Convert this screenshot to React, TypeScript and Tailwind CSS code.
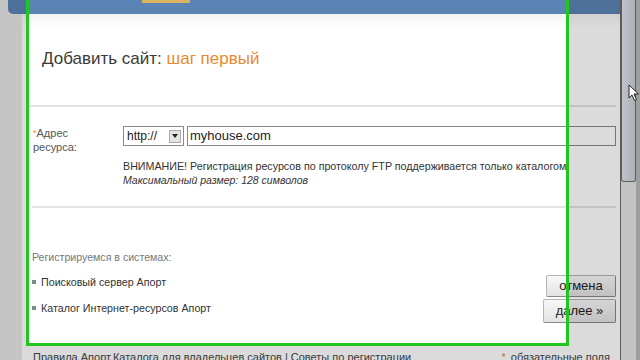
import React from "react";

const F = { fontFamily: '"Liberation Sans", Arial, sans-serif' };

export default function App() {
  return (
    <div className="relative flex w-[640px] h-[360px] overflow-hidden bg-white" style={F}>
      {/* page */}
      <div className="flex w-[620px] flex-col bg-white">
        {/* header */}
        <div className="flex h-[14px] shrink-0 bg-[#e6e6e6]">
          <div className="relative ml-[8px] flex-1 rounded-bl-[5px] bg-[#5a84b4]">
            <div className="absolute left-[134px] top-0 h-[3px] w-[48px] bg-[#d9b562]" />
          </div>
        </div>
        <div className="flex flex-1">
          <div className="w-[22px] bg-[#e6e6e6]" />
          <div className="flex flex-1 flex-col bg-[linear-gradient(#f3f3f3,#ffffff_14px)] pr-[4px]">
            {/* title */}
            <div className="pl-[20px] pt-[35px] text-[17px] leading-[20px] text-[#3a3a3a]">
              Добавить сайт: <span className="text-[#e98a2e]">шаг первый</span>
            </div>
            <div className="ml-[4px] mt-[36px] h-[2px] bg-[#e2e2e2]" />
            {/* address row */}
            <div className="mt-[19px] flex">
              <div className="w-[101px] pl-[11px] text-[11px] leading-[14px] text-[#555]">
                <span className="text-[#e98a2e] text-[9px] align-top">*</span>Адрес
                <br />
                ресурса:
              </div>
              <div className="flex flex-1 flex-col">
                <div className="flex h-[20px] gap-[3px]">
                  <div className="flex w-[61px] items-center border border-[#8a8a8a] bg-white pl-[3px] pr-[2px]">
                    <span className="flex-1 text-[12px] text-[#222]">http://</span>
                    <div className="flex h-[13px] w-[12px] items-center justify-center border border-[#aaa] bg-[#e4e4e4]">
                      <div className="h-0 w-0 border-l-[3px] border-r-[3px] border-t-[4px] border-l-transparent border-r-transparent border-t-[#222]" />
                    </div>
                  </div>
                  <div className="flex flex-1 items-center border border-[#8a8a8a] bg-white pl-[2px] text-[13px] text-[#222]">
                    myhouse.com
                  </div>
                </div>
                <div className="mt-[13px] whitespace-nowrap text-[10.7px] leading-[14px] text-[#333]">
                  ВНИМАНИЕ! Регистрация ресурсов по протоколу FTP поддерживается только каталогом
                </div>
                <div className="text-[10.5px] italic leading-[14px] text-[#333]">
                  Максимальный размер: 128 символов
                </div>
              </div>
            </div>
            <div className="ml-[10px] mt-[19px] h-[2px] bg-[#e4e4e4]" />
            {/* systems */}
            <div className="flex flex-1">
              <div className="flex flex-1 flex-col pl-[10px] pt-[42px]">
                <div className="text-[10.6px] leading-[14px] text-[#777]">Регистрируемся в системах:</div>
                <div className="mt-[11px] flex items-center gap-[5px] text-[10.7px] leading-[14px] text-[#333]">
                  <div className="h-[4px] w-[4px] bg-[#7a8a8a]" />
                  Поисковый сервер Апорт
                </div>
                <div className="mt-[12px] flex items-center gap-[5px] text-[10.7px] leading-[14px] text-[#333]">
                  <div className="h-[4px] w-[4px] bg-[#7a8a8a]" />
                  Каталог Интернет-ресурсов Апорт
                </div>
              </div>
              <div className="flex flex-col items-end pt-[67px]">
                <div className="flex h-[22px] w-[70px] items-center justify-center rounded-[2px] border border-[#b5b5b5] border-b-[#888] border-r-[#888] bg-[linear-gradient(#f8f8f8,#e2e2e2)] text-[13px] text-[#222]">
                  отмена
                </div>
                <div className="mt-[2px] flex h-[24px] w-[73px] items-center justify-center rounded-[2px] border border-[#b5b5b5] border-b-[#888] border-r-[#888] bg-[linear-gradient(#f8f8f8,#e2e2e2)] text-[13px] text-[#222]">
                  далее »
                </div>
              </div>
            </div>
            <div className="flex h-[10px] items-start pl-[11px] pr-[4px] text-[11px] leading-[14px] text-[#444]">
              <span className="underline decoration-[#999]">Правила Апорт.Каталога для владельцев сайтов</span>
              <span className="mx-[3px]">|</span>
              <span className="underline decoration-[#999]">Советы по регистрации</span>
              <span className="ml-auto text-[#e98a2e]">*</span>
              <span className="ml-[5px] mr-[2px]">обязательные поля</span>
            </div>
          </div>
        </div>
      </div>
      {/* scrollbar */}
      <div className="flex w-[20px] border-l border-[#6b6b6b] bg-[#e4e4e4]">
        <div className="h-[182px] w-[15px] rounded-b-[3px] border border-t-0 border-[#6f6f73] bg-[linear-gradient(90deg,#dfe2e8,#c9ced8)]" />
        <div className="w-[4px] bg-[#b9b9b9]" />
      </div>

      {/* dimming overlays outside the highlight frame */}
      <div className="absolute left-0 top-0 h-[360px] w-[26px] bg-black/[0.14]" />
      <div className="absolute left-[569px] top-0 h-[360px] w-[71px] bg-black/[0.14]" />
      <div className="absolute left-[26px] top-[346px] h-[14px] w-[543px] bg-black/[0.14]" />
      {/* green highlight frame */}
      <div className="absolute left-[26px] top-[-10px] h-[356px] w-[543px] border-[3px] border-[#1fc71f]" />
      {/* cursor */}
      <svg className="absolute left-[628px] top-[84px]" width="12" height="18" viewBox="0 0 12 18">
        <path d="M1 1 L1 14 L4 11 L6.5 16.5 L8.5 15.5 L6 10 L10.5 10 Z" fill="#fff" stroke="#222" strokeWidth="1" />
      </svg>
    </div>
  );
}
